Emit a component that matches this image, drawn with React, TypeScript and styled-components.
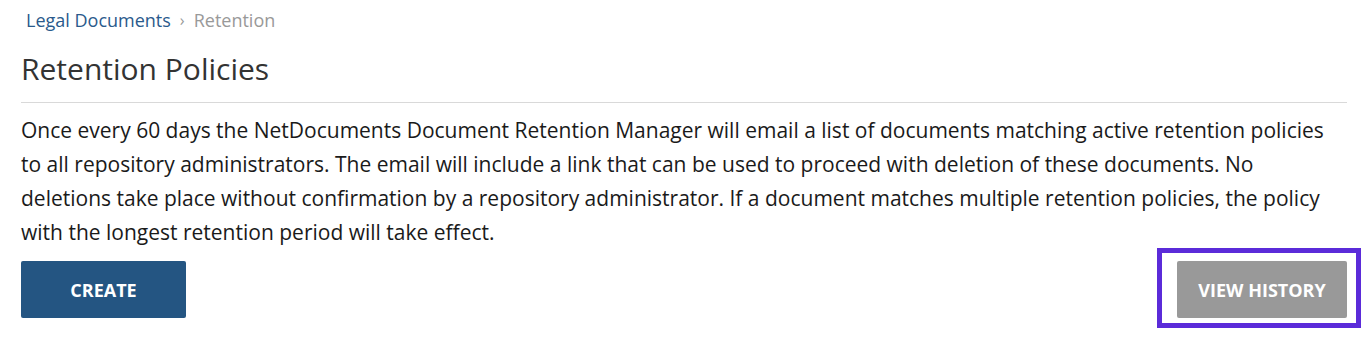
import React from "react";
import styled, { createGlobalStyle } from "styled-components";

const Global = createGlobalStyle`
  html, body { margin: 0; padding: 0; background: #fff; }
  body { font-family: "Open Sans", "Liberation Sans", sans-serif; }
  * { box-sizing: border-box; }
`;

const Page = styled.div`
  padding: 0 20px 19px 21px;
  display: flex;
  flex-direction: column;
`;

const Breadcrumb = styled.nav`
  display: flex;
  align-items: center;
  gap: 9px;
  padding: 8px 0 0 5px;
  height: 32px;
  font-size: 18px;
  line-height: 24px;
`;

const Crumb = styled.span<{ $current?: boolean }>`
  color: ${(p) => (p.$current ? "#999999" : "#2a5a8c")};
`;

const Sep = styled.span`
  color: #999;
  font-size: 16px;
`;

const Title = styled.h1`
  margin: 17px 0 0;
  font-size: 30px;
  font-weight: 400;
  color: #333;
  line-height: 40px;
  padding-bottom: 13px;
  border-bottom: 1px solid #d9d9d9;
`;

const Text = styled.p`
  margin: 10px 0 0;
  font-size: 21px;
  line-height: 34px;
  color: #1a1a1a;
`;

const Actions = styled.div`
  display: flex;
  justify-content: space-between;
  align-items: flex-start;
  margin-top: 12px;
`;

const Button = styled.button<{ $variant: "primary" | "muted" }>`
  display: block;
  height: 57px;
  border: none;
  border-radius: 2px;
  font-family: "Open Sans", "Liberation Sans", sans-serif;
  font-size: 18px;
  font-weight: 700;
  color: #fff;
  cursor: pointer;
  background: ${(p) => (p.$variant === "primary" ? "#245582" : "#999999")};
`;

const CreateButton = styled(Button)`
  width: 165px;
`;

const HistoryWrap = styled.div`
  position: relative;
  width: 170px;
  height: 57px;
`;

const HistoryButton = styled(Button)`
  width: 170px;
`;

const Focus = styled.div`
  position: absolute;
  left: -20px;
  top: -13px;
  width: 204px;
  height: 80px;
  border: 5px solid #5b2bd9;
  pointer-events: none;
`;

export default function App() {
  return (
    <>
      <Global />
      <Page>
        <Breadcrumb>
          <Crumb>Legal Documents</Crumb>
          <Sep>›</Sep>
          <Crumb $current>Retention</Crumb>
        </Breadcrumb>
        <Title>Retention Policies</Title>
        <Text>
          Once every 60 days the NetDocuments Document Retention Manager will email a list of documents matching active
          retention policies to all repository administrators. The email will include a link that can be used to proceed
          with deletion of these documents. No deletions take place without confirmation by a repository administrator.
          If a document matches multiple retention policies, the policy with the longest retention period will take
          effect.
        </Text>
        <Actions>
          <CreateButton $variant="primary">CREATE</CreateButton>
          <HistoryWrap>
            <HistoryButton $variant="muted">VIEW HISTORY</HistoryButton>
            <Focus />
          </HistoryWrap>
        </Actions>
      </Page>
    </>
  );
}
